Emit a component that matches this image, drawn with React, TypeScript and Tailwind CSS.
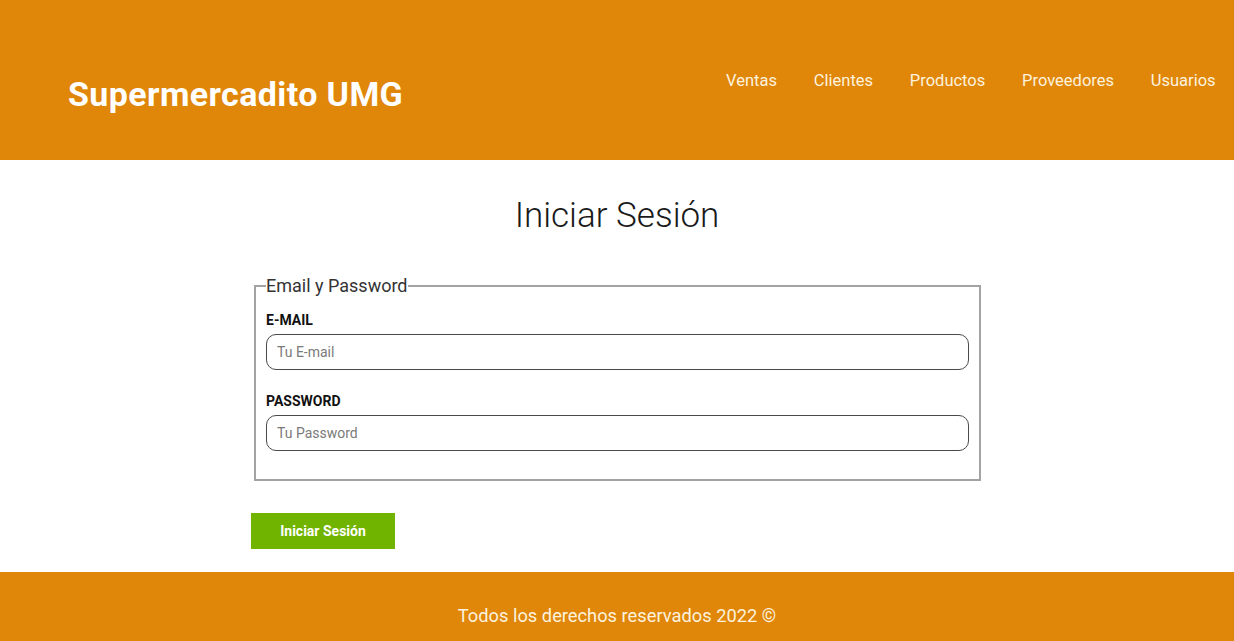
import React from "react";

export default function App() {
  return (
    <div className="min-h-screen bg-white" style={{ fontFamily: "Roboto, 'Liberation Sans', sans-serif" }}>
      <header className="h-[160px] bg-[#e0870a] flex justify-between items-start">
        <h1 className="mt-[74px] ml-[68px] text-[34px] leading-[40px] tracking-[0.4px] font-bold text-white">Supermercadito UMG</h1>
        <nav className="mt-[69px] flex">
          {["Ventas", "Clientes", "Productos", "Proveedores", "Usuarios"].map((n) => (
            <a key={n} href="#" className="px-[18.4px] text-[16.5px] leading-[24px] text-[#fdf2de]">
              {n}
            </a>
          ))}
        </nav>
      </header>
      <main className="pt-[34px] pb-[23px]">
        <h2 className="text-center text-[35px] leading-[43px] font-light text-[#1a1a1a]">Iniciar Sesión</h2>
        <div className="w-[732px] mx-auto mt-[36px]">
          <fieldset className="ml-[3px] mr-[2px] border-2 border-[#a3a3a3] px-[10px] pb-[28px]">
            <legend className="text-[18px] leading-[26px] text-[#333333] p-0">Email y Password</legend>
            <div className="mt-[11px]">
              <label className="block text-[14px] leading-[20px] font-bold text-[#111]">E-MAIL</label>
              <input
                type="email"
                placeholder="Tu E-mail"
                className="mt-[4px] block w-full h-[36px] rounded-[10px] border border-[#4a4a4a] px-[10px] text-[14px] placeholder:text-[#7a7a7a] outline-none"
              />
            </div>
            <div className="mt-[21px]">
              <label className="block text-[14px] leading-[20px] font-bold text-[#111]">PASSWORD</label>
              <input
                type="password"
                placeholder="Tu Password"
                className="mt-[4px] block w-full h-[36px] rounded-[10px] border border-[#4a4a4a] px-[10px] text-[14px] placeholder:text-[#7a7a7a] outline-none"
              />
            </div>
          </fieldset>
          <button className="mt-[32px] w-[144px] h-[36px] bg-[#71b400] text-white text-[14px] font-bold">
            Iniciar Sesión
          </button>
        </div>
      </main>
      <footer className="bg-[#e0870a] pt-[32px] pb-[30px] text-center">
        <p className="text-[18.3px] leading-[24px] text-[#fdf2de]">Todos los derechos reservados 2022 ©</p>
      </footer>
    </div>
  );
}
